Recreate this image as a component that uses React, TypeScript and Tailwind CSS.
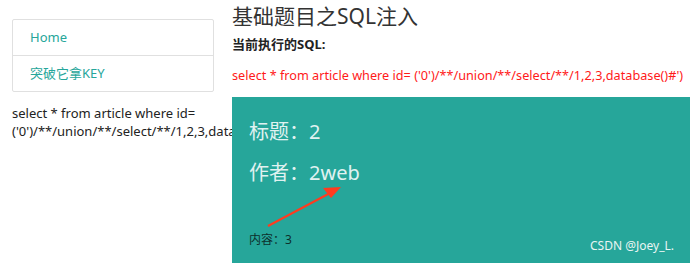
export default function App() {
  const font = { fontFamily: '"Noto Sans", "Noto Sans CJK SC", sans-serif' };
  return (
    <div className="w-[692px] h-[263px] overflow-hidden bg-white flex text-[#333]" style={font}>
      <div className="w-[232px] shrink-0 pl-[12px] pr-[18px] pt-[19px]">
        <div className="border border-[#e0e0e0] rounded-[2px] text-[13px] text-[#26a69a]">
          <div className="h-[36px] flex items-center pl-[17px] border-b border-[#e0e0e0]">Home</div>
          <div className="h-[35px] flex items-center pl-[17px]">突破它拿KEY</div>
        </div>
        <p className="mt-[12px] text-[13px] leading-[18px] text-[#222] whitespace-nowrap">
          select * from article where id=
          <br />
          ('0')/**/union/**/select/**/1,2,3,database()#')
        </p>
      </div>
      <div className="relative z-10 flex-1 flex flex-col">
        <h1 className="text-[21px] leading-[30px] text-[#333] mt-[1px]">基础题目之SQL注入</h1>
        <p className="text-[13px] font-bold text-[#222] mt-[4px] leading-[18px]">当前执行的SQL:</p>
        <p className="text-[12.7px] text-[#ff1a1a] mt-[13px] leading-[18px] whitespace-nowrap">
          select * from article where id= ('0')/**/union/**/select/**/1,2,3,database()#')
        </p>
        <div className="relative mt-[13px] mr-[2px] flex-1 bg-[#26a69a] pl-[17px] pt-[20px]">
          <p className="text-[20px] leading-[30px] text-[#e0f2f1]">标题：2</p>
          <p className="text-[20px] leading-[30px] text-[#e0f2f1] mt-[11px]">作者：2web</p>
          <p className="text-[12px] text-[#0d302c] mt-[43px]">内容：3</p>
          <span className="absolute right-[16px] bottom-[8px] text-[12px] text-[#e8f5f3]">CSDN @Joey_L.</span>
          <svg className="absolute left-0 top-0" width="460" height="166" viewBox="0 0 460 166">
            <line x1="36" y1="129" x2="100" y2="95" stroke="#ff3b1f" strokeWidth="2" />
            <polygon points="109,90 91,91 99,101" fill="#ff3b1f" />
          </svg>
        </div>
      </div>
    </div>
  );
}
